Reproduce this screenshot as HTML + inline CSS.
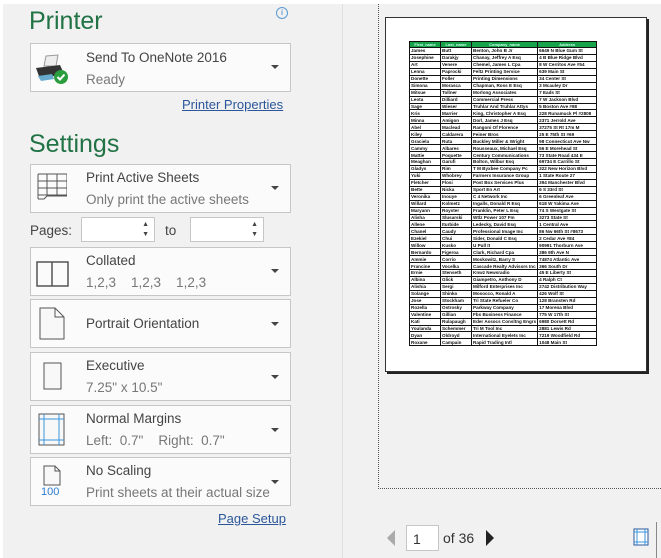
<!DOCTYPE html>
<html><head><meta charset="utf-8"><style>
*{margin:0;padding:0;box-sizing:border-box}
body{width:661px;height:558px;background:#f1f1f1;font-family:"Liberation Sans",sans-serif;position:relative;overflow:hidden;color:#444}
.a{position:absolute}
.h{color:#217346;font-size:25px;font-weight:normal}
.box{position:absolute;left:30px;width:261px;background:#fbfbfb;border:1px solid #c6c6c6}
.box .t1{position:absolute;left:55px;font-size:13.5px;color:#444}
.box .t2{position:absolute;left:55px;font-size:13.5px;color:#777}
.dd{position:absolute;right:11px;width:0;height:0;border-left:4px solid transparent;border-right:4px solid transparent;border-top:4px solid #444}
.lnk{color:#2b579a;text-decoration:underline;font-size:13px}
.inp{position:absolute;background:#fff;border:1px solid #c6c6c6;height:25px}
table{border-collapse:collapse;position:absolute;left:409px;top:41px;width:188px;font-size:4.6px;line-height:5px;font-weight:bold;color:#111}
td{border:1px solid #111;border-bottom:1.5px solid #111;height:6.95px;padding:0 1px;white-space:nowrap;overflow:hidden}
th{background:#17a34a;color:#cfe;border:1px solid #111;height:6px;font-size:4px}
</style></head><body>
<div class="a" style="left:0;top:0;width:661px;height:4px;background:#fff"></div>
<div class="a" style="left:0;top:4px;width:3px;height:554px;background:#fff"></div>
<div class="a h" style="left:29px;top:7px">Printer</div>
<div class="a" style="left:276px;top:7px;width:12px;height:12px;border:1px solid #5b9bd5;border-radius:50%;color:#2b7cd3;font-size:8px;text-align:center;line-height:10px">i</div>
<div class="box" style="top:43px;height:49px">
<svg class="a" style="left:3px;top:8px" width="36" height="36" viewBox="0 0 36 36"><path d="M12 4 L24 3 L22 14 L10 14Z" fill="#eee" stroke="#999"/><path d="M2 16 L26 13 L30 22 L6 27Z" fill="#333"/><path d="M4 24 L18 22 L20 27 L7 29Z" fill="#6ac"/><circle cx="27" cy="25" r="7" fill="#2a9d3f"/><path d="M23.5 25 l2.5 2.5 l4.5-5" stroke="#fff" stroke-width="2" fill="none"/></svg>
<div class="t1" style="top:6px">Send To OneNote 2016</div><div class="t2" style="top:28px">Ready</div><div class="dd" style="top:21px"></div></div>
<div class="a lnk" style="left:182px;top:97px">Printer Properties</div>
<div class="a h" style="left:29px;top:130px">Settings</div>
<div class="box" style="top:164px;height:49px">
<svg class="a" style="left:6px;top:8px" width="30" height="30"><path d="M1 1H30M1 1V26M1 26h6l3-3H30V1M1 8H30M1 15H30M1 22H30M10 1V23M20 1V23" stroke="#555" fill="none"/></svg>
<div class="t1" style="top:5px">Print Active Sheets</div><div class="t2" style="top:27px">Only print the active sheets</div><div class="dd" style="top:21px"></div></div>
<div class="a" style="left:30px;top:223px;font-size:13.5px">Pages:</div>
<div class="inp" style="left:81px;top:217px;width:74px"><span class="a" style="right:5px;top:3px;font-size:7px">▲</span><span class="a" style="right:5px;top:13px;font-size:7px">▼</span></div>
<div class="a" style="left:165px;top:223px;font-size:13.5px">to</div>
<div class="inp" style="left:190px;top:217px;width:74px"><span class="a" style="right:5px;top:3px;font-size:7px">▲</span><span class="a" style="right:5px;top:13px;font-size:7px">▼</span></div>
<div class="box" style="top:247px;height:49px">
<svg class="a" style="left:5px;top:13px" width="34" height="26"><path d="M1 1H32V25H1ZM16 1V25" stroke="#555" stroke-width="1.5" fill="none"/></svg>
<div class="t1" style="top:5px">Collated</div><div class="t2" style="top:27px">1,2,3&nbsp;&nbsp;&nbsp; 1,2,3&nbsp;&nbsp;&nbsp; 1,2,3</div><div class="dd" style="top:21px"></div></div>
<div class="box" style="top:299px;height:49px">
<svg class="a" style="left:8px;top:7px" width="26" height="34"><path d="M1 1H16L25 10V32H1Z M16 1V10H25" stroke="#555" fill="#f8f8f8"/></svg>
<div class="t1" style="top:16px">Portrait Orientation</div><div class="dd" style="top:22px"></div></div>
<div class="box" style="top:352px;height:49px">
<svg class="a" style="left:12px;top:9px" width="20" height="30"><rect x="1" y="1" width="17" height="26" stroke="#555" fill="#f8f8f8"/></svg>
<div class="t1" style="top:5px">Executive</div><div class="t2" style="top:27px">7.25" x 10.5"</div><div class="dd" style="top:22px"></div></div>
<div class="box" style="top:405px;height:49px">
<svg class="a" style="left:7px;top:7px" width="28" height="34"><rect x="1" y="1" width="25" height="31" stroke="#555" fill="#f8f8f8"/><path d="M6 1V32M21 1V32M1 6H26M1 27H26" stroke="#3a96dd"/></svg>
<div class="t1" style="top:5px">Normal Margins</div><div class="t2" style="top:27px">Left:&nbsp; 0.7"&nbsp;&nbsp;&nbsp; Right:&nbsp; 0.7"</div><div class="dd" style="top:22px"></div></div>
<div class="box" style="top:457px;height:49px">
<svg class="a" style="left:12px;top:7px" width="20" height="22"><path d="M1 1H12L17 6V20H1Z M12 1V6H17" stroke="#555" fill="#f8f8f8"/></svg>
<div class="a" style="left:10px;top:28px;font-size:11px;color:#2b7cd3">100</div>
<div class="t1" style="top:5px">No Scaling</div><div class="t2" style="top:27px">Print sheets at their actual size</div><div class="dd" style="top:22px"></div></div>
<div class="a lnk" style="left:218px;top:511px">Page Setup</div>
<div class="a" style="left:330px;top:4px;width:13px;height:554px;background:#f1f1f1;border-right:1px solid #e0e0e0"></div>
<div class="a" style="left:378px;top:4px;width:283px;height:485px;border-left:1px dotted #555;border-bottom:1px dotted #555"></div>
<div class="a" style="left:385px;top:17px;width:262px;height:355px;background:#fff;border:1px solid #333;box-shadow:2px 2px 0 #222"></div>
<table>
<tr><th style="width:31px">First_name</th><th style="width:31px">Last_name</th><th style="width:65px">Company_name</th><th>Address</th></tr>
<tr><td>James</td><td>Butt</td><td>Benton, John B Jr</td><td>6649 N Blue Gum St</td></tr>
<tr><td>Josephine</td><td>Darakjy</td><td>Chanay, Jeffrey A Esq</td><td>4 B Blue Ridge Blvd</td></tr>
<tr><td>Art</td><td>Venere</td><td>Chemel, James L Cpa</td><td>8 W Cerritos Ave #54</td></tr>
<tr><td>Lenna</td><td>Paprocki</td><td>Feltz Printing Service</td><td>639 Main St</td></tr>
<tr><td>Donette</td><td>Foller</td><td>Printing Dimensions</td><td>34 Center St</td></tr>
<tr><td>Simona</td><td>Morasca</td><td>Chapman, Ross E Esq</td><td>3 Mcauley Dr</td></tr>
<tr><td>Mitsue</td><td>Tollner</td><td>Morlong Associates</td><td>7 Eads St</td></tr>
<tr><td>Leota</td><td>Dilliard</td><td>Commercial Press</td><td>7 W Jackson Blvd</td></tr>
<tr><td>Sage</td><td>Wieser</td><td>Truhlar And Truhlar Attys</td><td>5 Boston Ave #88</td></tr>
<tr><td>Kris</td><td>Marrier</td><td>King, Christopher A Esq</td><td>228 Runamuck Pl #2808</td></tr>
<tr><td>Minna</td><td>Amigon</td><td>Dorl, James J Esq</td><td>2371 Jerrold Ave</td></tr>
<tr><td>Abel</td><td>Maclead</td><td>Rangoni Of Florence</td><td>37275 St Rt 17m M</td></tr>
<tr><td>Kiley</td><td>Caldarera</td><td>Feiner Bros</td><td>25 E 75th St #69</td></tr>
<tr><td>Graciela</td><td>Ruta</td><td>Buckley Miller &amp; Wright</td><td>98 Connecticut Ave Nw</td></tr>
<tr><td>Cammy</td><td>Albares</td><td>Rousseaux, Michael Esq</td><td>56 E Morehead St</td></tr>
<tr><td>Mattie</td><td>Poquette</td><td>Century Communications</td><td>73 State Road 434 E</td></tr>
<tr><td>Meaghan</td><td>Garufi</td><td>Bolton, Wilbur Esq</td><td>69734 E Carrillo St</td></tr>
<tr><td>Gladys</td><td>Rim</td><td>T M Byxbee Company Pc</td><td>322 New Horizon Blvd</td></tr>
<tr><td>Yuki</td><td>Whobrey</td><td>Farmers Insurance Group</td><td>1 State Route 27</td></tr>
<tr><td>Fletcher</td><td>Flosi</td><td>Post Box Services Plus</td><td>394 Manchester Blvd</td></tr>
<tr><td>Bette</td><td>Nicka</td><td>Sport En Art</td><td>6 S 33rd St</td></tr>
<tr><td>Veronika</td><td>Inouye</td><td>C 4 Network Inc</td><td>6 Greenleaf Ave</td></tr>
<tr><td>Willard</td><td>Kolmetz</td><td>Ingalls, Donald R Esq</td><td>618 W Yakima Ave</td></tr>
<tr><td>Maryann</td><td>Royster</td><td>Franklin, Peter L Esq</td><td>74 S Westgate St</td></tr>
<tr><td>Alisha</td><td>Slusarski</td><td>Wtlz Power 107 Fm</td><td>3273 State St</td></tr>
<tr><td>Allene</td><td>Iturbide</td><td>Ledecky, David Esq</td><td>1 Central Ave</td></tr>
<tr><td>Chanel</td><td>Caudy</td><td>Professional Image Inc</td><td>86 Nw 66th St #8673</td></tr>
<tr><td>Ezekiel</td><td>Chui</td><td>Sider, Donald C Esq</td><td>2 Cedar Ave #84</td></tr>
<tr><td>Willow</td><td>Kusko</td><td>U Pull It</td><td>90991 Thorburn Ave</td></tr>
<tr><td>Bernardo</td><td>Figeroa</td><td>Clark, Richard Cpa</td><td>386 9th Ave N</td></tr>
<tr><td>Ammie</td><td>Corrio</td><td>Moskowitz, Barry S</td><td>74874 Atlantic Ave</td></tr>
<tr><td>Francine</td><td>Vocelka</td><td>Cascade Realty Advisors Inc</td><td>366 South Dr</td></tr>
<tr><td>Ernie</td><td>Stenseth</td><td>Knwz Newsradio</td><td>45 E Liberty St</td></tr>
<tr><td>Albina</td><td>Glick</td><td>Giampetro, Anthony D</td><td>4 Ralph Ct</td></tr>
<tr><td>Alishia</td><td>Sergi</td><td>Milford Enterprises Inc</td><td>2742 Distribution Way</td></tr>
<tr><td>Solange</td><td>Shinko</td><td>Mosocco, Ronald A</td><td>426 Wolf St</td></tr>
<tr><td>Jose</td><td>Stockham</td><td>Tri State Refueler Co</td><td>128 Bransten Rd</td></tr>
<tr><td>Rozella</td><td>Ostrosky</td><td>Parkway Company</td><td>17 Morena Blvd</td></tr>
<tr><td>Valentine</td><td>Gillian</td><td>Fbs Business Finance</td><td>775 W 17th St</td></tr>
<tr><td>Kati</td><td>Rulapaugh</td><td>Eder Assocs Consltng Engrs</td><td>6980 Dorsett Rd</td></tr>
<tr><td>Youlanda</td><td>Schemmer</td><td>Tri M Tool Inc</td><td>2881 Lewis Rd</td></tr>
<tr><td>Dyan</td><td>Oldroyd</td><td>International Eyelets Inc</td><td>7219 Woodfield Rd</td></tr>
<tr><td>Roxane</td><td>Campain</td><td>Rapid Trading Intl</td><td>1048 Main St</td></tr>
</table>
<svg class="a" style="left:386px;top:529px" width="12" height="18"><path d="M9 1L1 9L9 17Z" fill="#aaa"/></svg>
<div class="a" style="left:406px;top:525px;width:33px;height:26px;background:#fff;border:1px solid #c6c6c6;font-size:14px;padding:5px 0 0 6px;color:#333">1</div>
<div class="a" style="left:443px;top:530px;font-size:14px;color:#333">of 36</div>
<svg class="a" style="left:484px;top:529px" width="12" height="18"><path d="M2 1L10 9L2 17Z" fill="#222"/></svg>
<svg class="a" style="left:633px;top:528px" width="16" height="19"><rect x="1" y="1" width="14" height="16" fill="#fff" stroke="#2b579a"/><path d="M4 1V17M12 1V17M1 4H15M1 14H15" stroke="#3a96dd"/></svg>
<div class="a" style="left:656px;top:522px;width:1px;height:36px;background:#888"></div>
</body></html>
